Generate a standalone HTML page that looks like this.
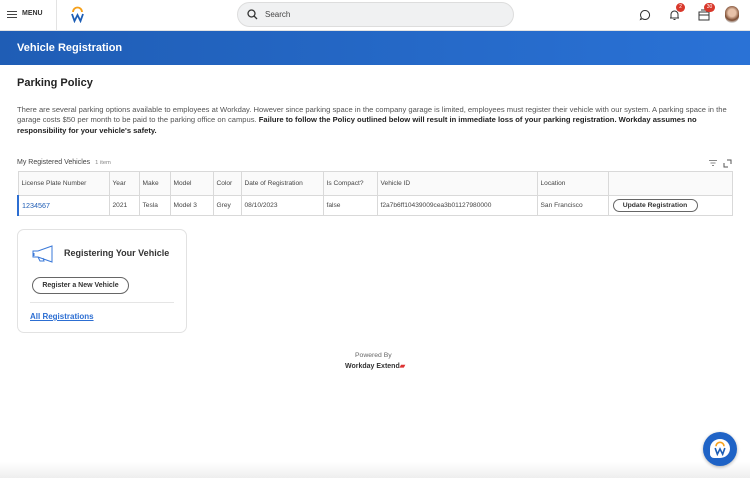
<!DOCTYPE html>
<html><head><style>
*{margin:0;padding:0;box-sizing:border-box}
body{width:750px;height:478px;overflow:hidden;background:#fff;font-family:"Liberation Sans",sans-serif;color:#333;position:relative}
.abs{position:absolute}
.hdr{left:0;top:0;width:750px;height:31px;background:#fff;border-bottom:1px solid #e3e3e3}
.banner{left:0;top:31px;width:750px;height:34px;background:linear-gradient(90deg,#1f5db5,#2a72d6);color:#fff;font-weight:bold;font-size:11px;padding:11px 17px}
table{border-collapse:collapse;font-size:6.6px;color:#444}
td{border:1px solid #d9d9d9;padding:0 3px;white-space:nowrap}
.btn{border:1px solid #666;border-radius:10px;background:#fff;font-weight:bold;color:#333;text-align:center}
</style></head><body>
<div class="abs hdr">
 <div class="abs" style="left:7px;top:11px;width:10px;height:1.3px;background:#444;box-shadow:0 3px 0 #444,0 6px 0 #444"></div>
 <div class="abs" style="left:22px;top:10px;font-size:7px;font-weight:bold;color:#333">MENU</div>
 <div class="abs" style="left:56px;top:0;width:1px;height:31px;background:#e3e3e3"></div>
 <svg class="abs" style="left:70px;top:6px" width="15" height="17" viewBox="0 0 15 17"><path d="M3 6 A4.5 4.5 0 0 1 12 6" stroke="#f5a01a" stroke-width="1.8" fill="none"/><path d="M2 8 L4.5 15 L7.5 9 L10.5 15 L13 8" stroke="#1d5eb6" stroke-width="1.8" fill="none"/></svg>
 <div class="abs" style="left:237px;top:2px;width:277px;height:25px;border:1px solid #ddd;border-radius:13px;background:#f0f1f2"></div>
 <svg class="abs" style="left:247px;top:9px" width="11" height="11" viewBox="0 0 11 11"><circle cx="4.5" cy="4.5" r="3.5" stroke="#333" stroke-width="1.3" fill="none"/><path d="M7 7 L10 10" stroke="#333" stroke-width="1.3"/></svg>
 <div class="abs" style="left:265px;top:10px;font-size:8px;color:#444">Search</div>
 <svg class="abs" style="left:639px;top:9px" width="12" height="12" viewBox="0 0 12 12"><path d="M6 1.5a4.5 4.5 0 1 1-2.5 8.2L1.5 10.5l.8-2A4.5 4.5 0 0 1 6 1.5z" stroke="#333" fill="none"/></svg>
 <svg class="abs" style="left:669px;top:9px" width="11" height="12" viewBox="0 0 11 12"><path d="M2 9V5.5a3.5 3.5 0 0 1 7 0V9h1M1 9h9M4.5 10.5h2" stroke="#333" fill="none"/></svg>
 <div class="abs" style="left:676px;top:3px;width:9px;height:9px;border-radius:50%;background:#d9382b;color:#fff;font-size:5px;text-align:center;line-height:9px">2</div>
 <svg class="abs" style="left:698px;top:9px" width="12" height="12" viewBox="0 0 12 12"><rect x="1" y="3" width="10" height="8" stroke="#333" fill="none"/><path d="M1 6h10M3 1h6" stroke="#333"/></svg>
 <div class="abs" style="left:704px;top:3px;width:11px;height:9px;border-radius:5px;background:#d9382b;color:#fff;font-size:5px;text-align:center;line-height:9px">30</div>
 <div class="abs" style="left:725px;top:6px;width:14px;height:17px;border-radius:7px;background:radial-gradient(circle at 50% 40%,#e7c1a8 30%,#7a4a30 60%,#ddd 80%)"></div>
</div>
<div class="abs banner">Vehicle Registration</div>
<div class="abs" style="left:17px;top:77px;font-size:11px;font-weight:bold;color:#222">Parking Policy</div>
<div class="abs" style="left:17px;top:105px;width:714px;font-size:7.6px;line-height:10.3px;color:#555">There are several parking options available to employees at Workday. However since parking space in the company garage is limited, employees must register their vehicle with our system. A parking space in the garage costs $50 per month to be paid to the parking office on campus. <b style="color:#222">Failure to follow the Policy outlined below will result in immediate loss of your parking registration. Workday assumes no responsibility for your vehicle's safety.</b></div>
<div class="abs" style="left:17px;top:159px;font-size:7px;color:#444">My Registered Vehicles <span style="color:#888;font-size:5.8px;margin-left:3px">1 item</span></div>
<svg class="abs" style="left:708px;top:159px" width="24" height="9" viewBox="0 0 24 9"><path d="M1 1.5h8M2.5 4h5M4 6.5h2" stroke="#888"/><path d="M16 4V8h4M19 1h4v4" stroke="#555" fill="none"/></svg>
<table class="abs" style="left:17px;top:171px;width:716px">
<tr style="height:24px;background:#fafafa"><td style="width:91px">License Plate Number</td><td style="width:30px">Year</td><td style="width:31px">Make</td><td style="width:43px">Model</td><td style="width:28px">Color</td><td style="width:82px">Date of Registration</td><td style="width:54px">Is Compact?</td><td style="width:160px">Vehicle ID</td><td style="width:71px">Location</td><td></td></tr>
<tr style="height:20px"><td style="border-left:2px solid #2c6ed2;color:#1f5db5;font-size:7.2px">1234567</td><td>2021</td><td>Tesla</td><td>Model 3</td><td>Grey</td><td>08/10/2023</td><td>false</td><td>f2a7b6ff10439009cea3b01127980000</td><td>San Francisco</td><td><div class="btn" style="width:85px;height:13px;font-size:6.8px;line-height:11px;margin-left:1px">Update Registration</div></td></tr>
</table>
<div class="abs" style="left:17px;top:229px;width:170px;height:104px;border:1px solid #e2e2e2;border-radius:7px"></div>
<svg class="abs" style="left:31px;top:245px" width="24" height="18" viewBox="0 0 24 18"><path d="M2 6h5l14-5v16L7 12H2z M3 8v3M7 12l2 4h4l-1-3" stroke="#3a78d8" stroke-width="1" fill="none"/></svg>
<div class="abs" style="left:64px;top:248px;font-size:9px;font-weight:bold;color:#333">Registering Your Vehicle</div>
<div class="abs btn" style="left:32px;top:277px;width:97px;height:17px;font-size:7px;line-height:15px">Register a New Vehicle</div>
<div class="abs" style="left:30px;top:302px;width:144px;height:1px;background:#e5e5e5"></div>
<div class="abs" style="left:30px;top:312px;font-size:8px;font-weight:bold;color:#2c6ed2;text-decoration:underline">All Registrations</div>
<div class="abs" style="left:355px;top:352px;font-size:6.8px;color:#666">Powered By</div>
<div class="abs" style="left:345px;top:362px;font-size:7px;font-weight:bold;color:#333">Workday Extend<span style="color:#d33">▰</span></div>
<div class="abs" style="left:0;top:462px;width:750px;height:16px;background:linear-gradient(#fff,#eee)"></div>
<div class="abs" style="left:703px;top:432px;width:34px;height:34px;border-radius:50%;background:#1f63c6;box-shadow:0 1px 3px rgba(0,0,0,.3)"></div>
<div class="abs" style="left:710px;top:439px;width:20px;height:19px;border-radius:50% 50% 50% 20%;background:#fff"></div>
<svg class="abs" style="left:713px;top:441px" width="14" height="15" viewBox="0 0 15 17"><path d="M3 6 A4.5 4.5 0 0 1 12 6" stroke="#f5a01a" stroke-width="1.8" fill="none"/><path d="M2 8 L4.5 15 L7.5 9 L10.5 15 L13 8" stroke="#1d5eb6" stroke-width="1.8" fill="none"/></svg>
</body></html>
